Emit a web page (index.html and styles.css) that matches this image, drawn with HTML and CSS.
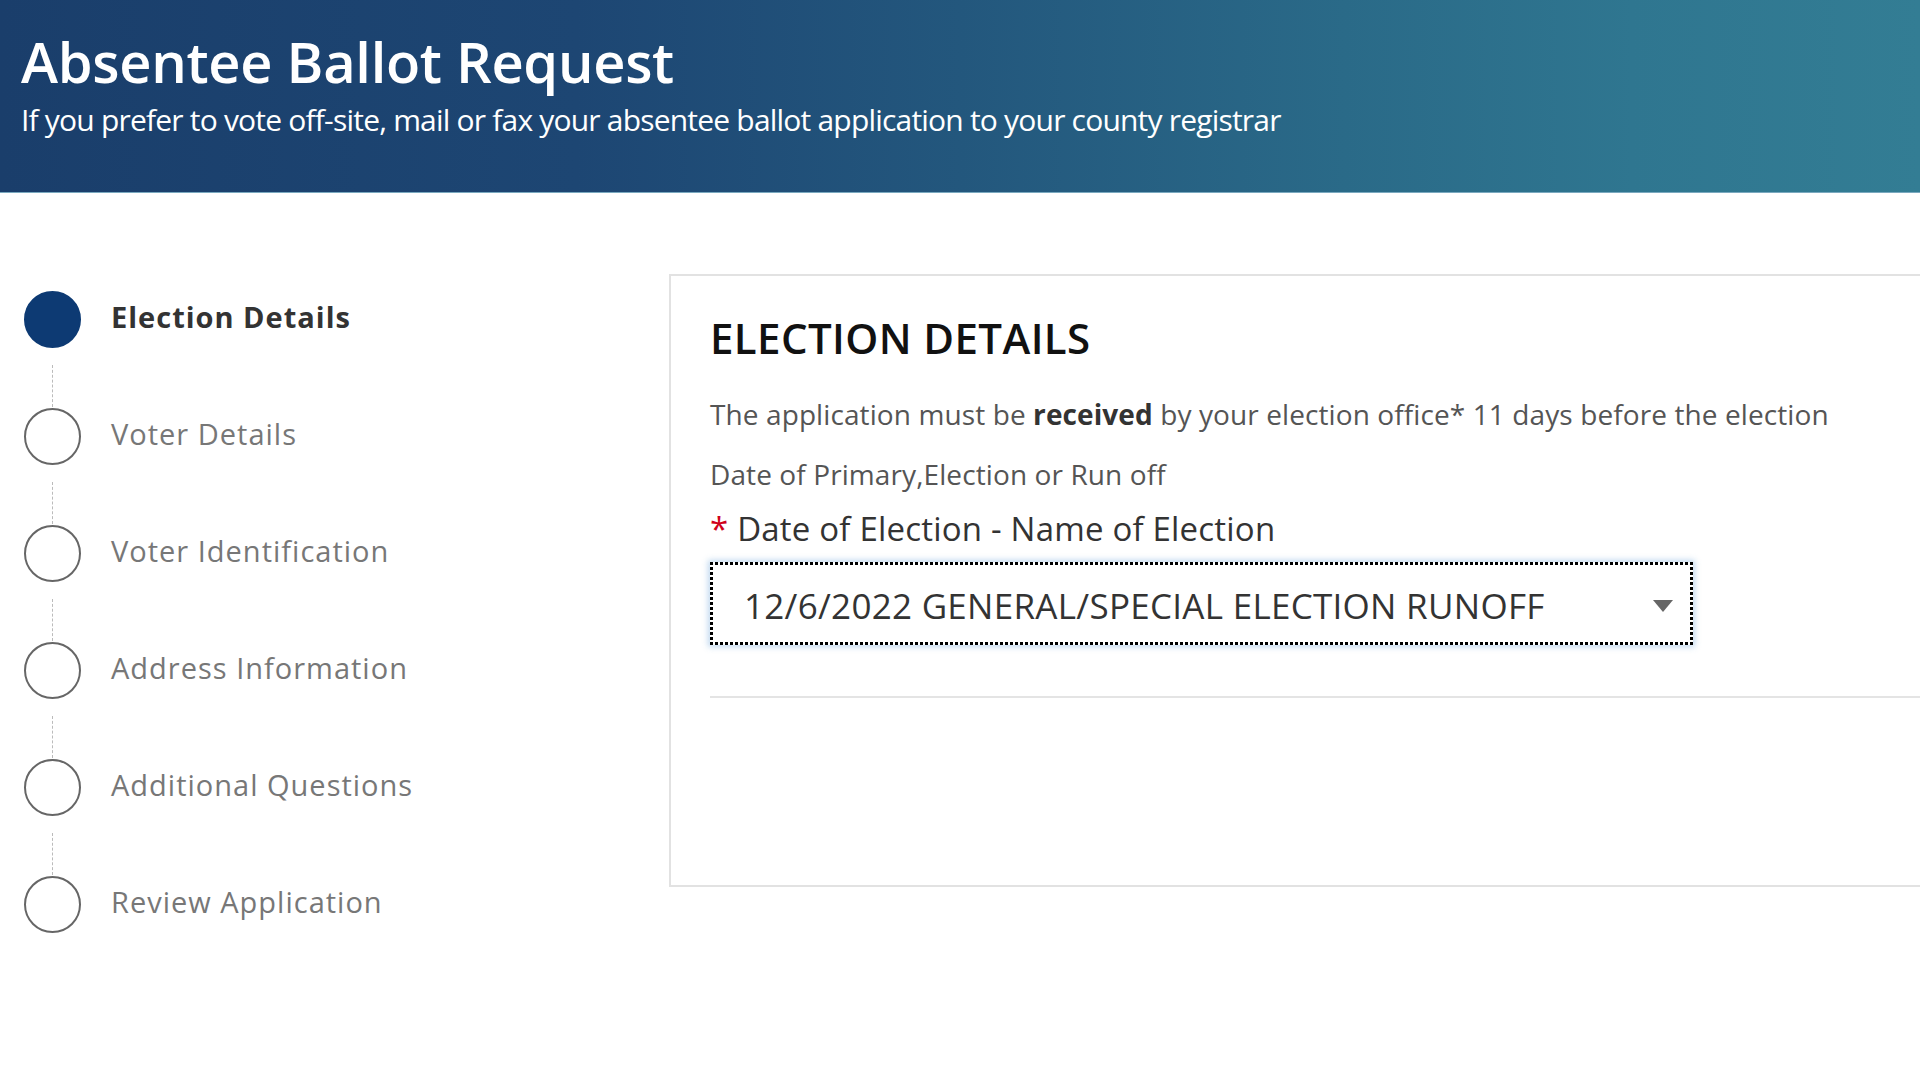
FILE: index.html
```html
<!DOCTYPE html>
<html lang="en">
<head>
<meta charset="utf-8">
<title>Absentee Ballot Request</title>
<link rel="stylesheet" href="styles.css">
</head>
<body>
<header class="banner">
  <h1 class="banner-title">Absentee Ballot Request</h1>
  <p class="banner-sub">If you prefer to vote off-site, mail or fax your absentee ballot application to your county registrar</p>
</header>
<main class="main">
  <nav class="steps">
    <div class="step active"><span class="dot"></span><span class="step-label">Election Details</span></div>
    <div class="step-line"></div>
    <div class="step"><span class="dot"></span><span class="step-label">Voter Details</span></div>
    <div class="step-line"></div>
    <div class="step"><span class="dot"></span><span class="step-label">Voter Identification</span></div>
    <div class="step-line"></div>
    <div class="step"><span class="dot"></span><span class="step-label">Address Information</span></div>
    <div class="step-line"></div>
    <div class="step"><span class="dot"></span><span class="step-label">Additional Questions</span></div>
    <div class="step-line"></div>
    <div class="step"><span class="dot"></span><span class="step-label">Review Application</span></div>
  </nav>
  <section class="card">
    <h2 class="card-title">ELECTION DETAILS</h2>
    <p class="note">The application must be <b>received</b> by your election office* 11 days before the election</p>
    <p class="note note-2">Date of Primary,Election or Run off</p>
    <label class="field-label"><span class="req">*</span> Date of Election - Name of Election</label>
    <div class="select">
      <span class="select-text">12/6/2022 GENERAL/SPECIAL ELECTION RUNOFF</span>
      <svg class="caret" width="20" height="12" viewBox="0 0 20 12"><path d="M0 0 H20 L10 12 Z" fill="#666"/></svg>
    </div>
    <div class="divider"></div>
  </section>
</main>
</body>
</html>
```
FILE: styles.css
```css
html, body {
  margin: 0;
  padding: 0;
  background: #fff;
  font-family: "Open Sans", "Noto Sans", sans-serif;
  overflow: hidden;
}
.banner {
  height: 193px;
  box-sizing: border-box;
  padding: 28px 0 0 21px;
  background: linear-gradient(90deg, #1a3e6b 0%, #1d4673 30%, #23577d 50%, #2a6a88 70%, #2f7690 85%, #337d94 100%);
  border-bottom: 1px solid #7aa9bf;
  color: #fff;
}
.banner-title {
  margin: 0;
  font-size: 56px;
  font-weight: 600;
  line-height: 66px;
  letter-spacing: -0.3px;
}
.banner-sub {
  margin: 6px 0 0;
  font-size: 30px;
  line-height: 40px;
  font-stretch: 92%;
  letter-spacing: -0.8px;
  font-weight: 500;
}
.main {
  display: flex;
  padding-top: 81px;
}
.steps {
  width: 669px;
  flex: none;
  box-sizing: border-box;
  padding: 17px 0 0 24px;
  display: flex;
  flex-direction: column;
}
.step {
  display: flex;
  align-items: center;
  height: 57px;
}
.dot {
  width: 57px;
  height: 57px;
  box-sizing: border-box;
  border: 2px solid #666;
  border-radius: 50%;
  flex: none;
  background: #fff;
}
.step.active .dot {
  background: #0d3a73;
  border-color: #0d3a73;
}
.step-label {
  margin-left: 30px;
  font-size: 29px;
  letter-spacing: 1px;
  color: #777;
  line-height: 40px;
  margin-top: -5px;
}
.step.active .step-label {
  color: #333;
  font-weight: 700;
  letter-spacing: 1px;
}
.step-line {
  width: 0;
  height: 42px;
  margin: 17px 0 1px 28px;
  border-left: 1px dashed #bbb;
}
.card {
  flex: 1;
  height: 613px;
  box-sizing: border-box;
  border: 2px solid #e2e2e2;
  border-right: none;
  padding: 37px 0 0 39px;
}
.card-title {
  margin: 0;
  font-size: 42px;
  font-weight: 600;
  line-height: 50px;
  color: #111;
  letter-spacing: 0.4px;
}
.note {
  margin: 33px 0 0;
  font-size: 28px;
  line-height: 36px;
  color: #555;
  letter-spacing: 0.1px;
}
.note b {
  color: #333;
  font-weight: 700;
}
.note-2 {
  margin-top: 24px;
}
.field-label {
  display: block;
  margin-top: 16px;
  font-size: 33px;
  line-height: 42px;
  color: #333;
  font-weight: 500;
  letter-spacing: 0.2px;
}
.req {
  color: #d0021b;
  font-weight: 400;
}
.select {
  margin-top: 12px;
  width: 983px;
  height: 83px;
  box-sizing: border-box;
  display: flex;
  align-items: center;
  justify-content: space-between;
  padding: 4px 20px 0 34px;
  background:
    repeating-linear-gradient(90deg, #000 0 3px, transparent 3px 5px) top left / 100% 3px no-repeat,
    repeating-linear-gradient(90deg, #000 0 3px, transparent 3px 5px) bottom left / 100% 3px no-repeat,
    repeating-linear-gradient(180deg, #000 0 3px, transparent 3px 5px) top left / 3px 100% no-repeat,
    repeating-linear-gradient(180deg, #000 0 3px, transparent 3px 5px) top right / 3px 100% no-repeat,
    #fff;
  box-shadow: 0 0 6px 2px rgba(120, 170, 220, 0.45);
}
.select-text {
  font-size: 35px;
  color: #333;
  line-height: 44px;
  letter-spacing: 0.28px;
}
.caret {
  display: block;
}
.divider {
  margin-top: 51px;
  height: 2px;
  background: #e4e4e4;
}
```
